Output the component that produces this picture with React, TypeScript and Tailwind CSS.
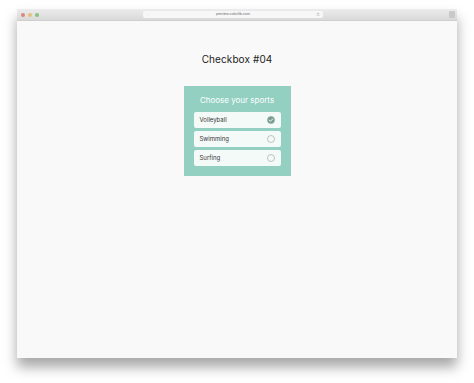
import { useState } from "react"

const sports = ["Volleyball", "Swimming", "Surfing"]

function CheckCircle({ checked }: { checked: boolean }) {
  if (checked) {
    return (
      <svg width="8" height="8" viewBox="0 0 16 16">
        <circle cx="8" cy="8" r="7.5" fill="#7d9d97" />
        <path d="M4.5 8.2l2.4 2.4 4.6-4.8" fill="none" stroke="#ffffff" strokeWidth="1.8" strokeLinecap="round" strokeLinejoin="round" />
      </svg>
    )
  }
  return (
    <svg width="8" height="8" viewBox="0 0 16 16">
      <circle cx="8" cy="8" r="7" fill="none" stroke="#a3aeac" strokeWidth="1.4" />
    </svg>
  )
}

export default function App() {
  const [selected, setSelected] = useState<string[]>(["Volleyball"])

  const toggle = (name: string) => {
    setSelected((prev) => (prev.includes(name) ? prev.filter((s) => s !== name) : [...prev, name]))
  }

  return (
    <div className="w-[474px] h-[383px] bg-white overflow-hidden font-['Inter',sans-serif]">
      <div className="ml-[17px] mt-[9px] w-[440px] h-[349px] flex flex-col shadow-[0_9px_12px_rgba(0,0,0,0.35)]">
        {/* browser chrome */}
        <div className="h-[12px] bg-gradient-to-b from-[#ececec] to-[#d9d9d9] border-b border-[#cfcfcf] flex items-center relative">
          <div className="flex gap-[3px] ml-[4px]">
            <span className="w-[4px] h-[4px] rounded-full bg-[#e0857c]" />
            <span className="w-[4px] h-[4px] rounded-full bg-[#e4c07a]" />
            <span className="w-[4px] h-[4px] rounded-full bg-[#8bc27e]" />
          </div>
          <div className="ml-[104px] w-[180px] h-[7px] bg-[#f7f7f7] rounded-[2px] flex items-center justify-center relative">
            <span className="absolute left-[3px] text-[4px] text-[#aaa]">◌</span>
            <span className="text-[3.5px] leading-none text-[#666]">preview.colorlib.com</span>
            <span className="absolute right-[3px] text-[4px] text-[#999]">↻</span>
          </div>
          <div className="ml-auto mr-[2px] w-[6px] h-[7px] bg-[#c9c9c9] rounded-[1px]" />
        </div>

        {/* page content */}
        <div className="flex-1 bg-[#f9f9f9] flex flex-col items-center">
          <h1 className="mt-[31px] text-[10px] leading-[14px] text-[#222] tracking-[0.1px]">Checkbox #04</h1>
          <div className="mt-[20px] w-[107px] bg-[#93d0c2] px-[10px] pt-[9px] pb-[10px]">
            <p className="text-center text-white text-[8px] leading-[10px]">Choose your sports</p>
            <div className="mt-[7px] flex flex-col gap-[3px]">
              {sports.map((s) => (
                <button
                  key={s}
                  onClick={() => toggle(s)}
                  className="h-[16px] bg-[#f3faf8] rounded-[2px] flex items-center justify-between pl-[6px] pr-[6px]"
                >
                  <span className="text-[6px] text-[#333] leading-none">{s}</span>
                  <CheckCircle checked={selected.includes(s)} />
                </button>
              ))}
            </div>
          </div>
        </div>
      </div>
    </div>
  )
}
